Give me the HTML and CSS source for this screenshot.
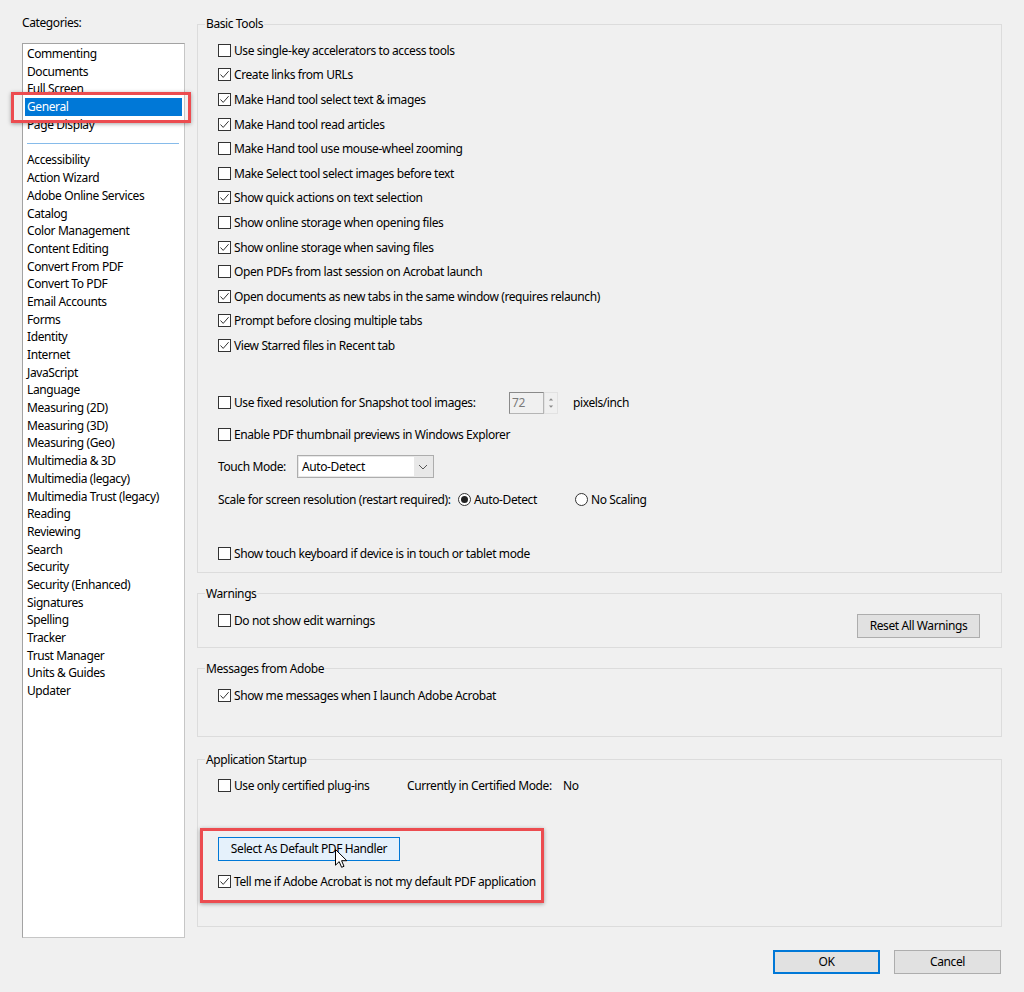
FILE: index.html
```html
<!DOCTYPE html>
<html lang="en">

<head>
    <meta charset="UTF-8">
    <meta name="viewport" content="width=device-width, initial-scale=1.0">
    <title>Preferences - General</title>
    <link rel="stylesheet" href="styles.css">
</head>

<body>
    <div class="dialog">
        <div class="categories">
            <div class="cat-title">Categories:</div>
            <ul class="cat-list">
                <li>Commenting</li>
                <li>Documents</li>
                <li>Full Screen</li>
                <li class="active">General</li>
                <li>Page Display</li>
                <li class="sep"></li>
                <li>Accessibility</li>
                <li>Action Wizard</li>
                <li>Adobe Online Services</li>
                <li>Catalog</li>
                <li>Color Management</li>
                <li>Content Editing</li>
                <li>Convert From PDF</li>
                <li>Convert To PDF</li>
                <li>Email Accounts</li>
                <li>Forms</li>
                <li>Identity</li>
                <li>Internet</li>
                <li>JavaScript</li>
                <li>Language</li>
                <li>Measuring (2D)</li>
                <li>Measuring (3D)</li>
                <li>Measuring (Geo)</li>
                <li>Multimedia &amp; 3D</li>
                <li>Multimedia (legacy)</li>
                <li>Multimedia Trust (legacy)</li>
                <li>Reading</li>
                <li>Reviewing</li>
                <li>Search</li>
                <li>Security</li>
                <li>Security (Enhanced)</li>
                <li>Signatures</li>
                <li>Spelling</li>
                <li>Tracker</li>
                <li>Trust Manager</li>
                <li>Units &amp; Guides</li>
                <li>Updater</li>
            </ul>
        </div>

        <div class="panel">
            <fieldset class="group basic">
                <legend>Basic Tools</legend>
                <label class="row"><span class="box"></span>Use single-key accelerators to access tools</label>
                <label class="row"><span class="box on"><svg viewBox="0 0 11 11"><path d="M1.5 5.5 4.2 8.4 9.6 2.2"/></svg></span>Create links from URLs</label>
                <label class="row"><span class="box on"><svg viewBox="0 0 11 11"><path d="M1.5 5.5 4.2 8.4 9.6 2.2"/></svg></span>Make Hand tool select text &amp; images</label>
                <label class="row"><span class="box on"><svg viewBox="0 0 11 11"><path d="M1.5 5.5 4.2 8.4 9.6 2.2"/></svg></span>Make Hand tool read articles</label>
                <label class="row"><span class="box"></span>Make Hand tool use mouse-wheel zooming</label>
                <label class="row"><span class="box"></span>Make Select tool select images before text</label>
                <label class="row"><span class="box on"><svg viewBox="0 0 11 11"><path d="M1.5 5.5 4.2 8.4 9.6 2.2"/></svg></span>Show quick actions on text selection</label>
                <label class="row"><span class="box"></span>Show online storage when opening files</label>
                <label class="row"><span class="box on"><svg viewBox="0 0 11 11"><path d="M1.5 5.5 4.2 8.4 9.6 2.2"/></svg></span>Show online storage when saving files</label>
                <label class="row"><span class="box"></span>Open PDFs from last session on Acrobat launch</label>
                <label class="row"><span class="box on"><svg viewBox="0 0 11 11"><path d="M1.5 5.5 4.2 8.4 9.6 2.2"/></svg></span>Open documents as new tabs in the same window (requires relaunch)</label>
                <label class="row"><span class="box on"><svg viewBox="0 0 11 11"><path d="M1.5 5.5 4.2 8.4 9.6 2.2"/></svg></span>Prompt before closing multiple tabs</label>
                <label class="row"><span class="box on"><svg viewBox="0 0 11 11"><path d="M1.5 5.5 4.2 8.4 9.6 2.2"/></svg></span>View Starred files in Recent tab</label>

                <div class="row snap">
                    <label class="snap-label"><span class="box"></span>Use fixed resolution for Snapshot tool images:</label>
                    <div class="spin">
                        <span class="spin-field">72</span>
                        <span class="spin-btns">
                            <svg viewBox="0 0 14 22"><path d="M4.5 8 7 5.5 9.5 8Z M4.5 14 7 16.5 9.5 14Z"/></svg>
                        </span>
                    </div>
                    <span class="unit">pixels/inch</span>
                </div>
                <label class="row thumb"><span class="box"></span>Enable PDF thumbnail previews in Windows Explorer</label>
                <div class="row touch">
                    <span class="touch-label">Touch Mode:</span>
                    <div class="select">
                        <span class="select-text">Auto-Detect</span>
                        <span class="select-arrow"><svg viewBox="0 0 18 20"><path d="M5 8 9 12 13 8"/></svg></span>
                    </div>
                </div>
                <div class="row scale">
                    <span class="scale-label">Scale for screen resolution (restart required):</span>
                    <label class="radio-item"><span class="radio on"></span>Auto-Detect</label>
                    <label class="radio-item"><span class="radio"></span>No Scaling</label>
                </div>
                <label class="row keyboard"><span class="box"></span>Show touch keyboard if device is in touch or tablet mode</label>
            </fieldset>

            <fieldset class="group warnings">
                <legend>Warnings</legend>
                <div class="warn-row">
                    <label class="row"><span class="box"></span>Do not show edit warnings</label>
                    <button class="btn reset">Reset All Warnings</button>
                </div>
            </fieldset>

            <fieldset class="group messages">
                <legend>Messages from Adobe</legend>
                <label class="row"><span class="box on"><svg viewBox="0 0 11 11"><path d="M1.5 5.5 4.2 8.4 9.6 2.2"/></svg></span>Show me messages when I launch Adobe Acrobat</label>
            </fieldset>

            <fieldset class="group startup">
                <legend>Application Startup</legend>
                <div class="row">
                    <label class="cert"><span class="box"></span>Use only certified plug-ins</label>
                    <span class="cert-mode">Currently in Certified Mode:</span>
                    <span>No</span>
                </div>
                <div class="mark">
                    <div class="handler-wrap">
                        <button class="btn handler">Select As Default PDF Handler</button>
                        <svg class="cursor" viewBox="0 0 13 20"><path d="M0.5 0.5V16.2L4.2 12.6 6.6 18.3 9 17.3 6.6 11.7H11.8Z"/></svg>
                    </div>
                    <label class="row"><span class="box on"><svg viewBox="0 0 11 11"><path d="M1.5 5.5 4.2 8.4 9.6 2.2"/></svg></span>Tell me if Adobe Acrobat is not my default PDF application</label>
                </div>
            </fieldset>

            <div class="actions">
                <button class="btn ok">OK</button>
                <button class="btn">Cancel</button>
            </div>
        </div>
    </div>
</body>

</html>
```

FILE: styles.css
```css
* {
    margin: 0;
    padding: 0;
    box-sizing: border-box;
}

body {
    background: #f0f0f0;
    font-family: "Noto Sans", "Open Sans", sans-serif;
    font-size: 12px;
    letter-spacing: -0.4px;
    color: #000;
}

.dialog {
    display: flex;
    padding: 15px 0 0 22px;
    height: 992px;
}

/* left side: category list */
.categories {
    width: 163px;
    margin-right: 12px;
}

.cat-title {
    height: 16px;
    line-height: 16px;
    margin-bottom: 12px;
}

.cat-list {
    list-style: none;
    height: 895px;
    background: #fff;
    border: 1px solid #a3a3a3;
    border-right-color: #c6c6c6;
    border-bottom-color: #c6c6c6;
    padding-top: 1px;
}

.cat-list li {
    height: 17.7px;
    line-height: 17.7px;
    padding-left: 4px;
    white-space: nowrap;
}

.cat-list li.active {
    position: relative;
    margin: 0 2px;
    padding-left: 2px;
    background: #0078d7;
    color: #fff;
}

.cat-list li.active::after {
    content: "";
    position: absolute;
    left: -14px;
    right: -9px;
    top: -6px;
    bottom: -7px;
    border: 3px solid #ec4c50;
    box-shadow: 0 1px 4px rgba(0, 0, 0, 0.35);
}

.cat-list li.sep {
    height: 1px;
    margin: 10px 5px 7px 4px;
    padding: 0;
    background: #86bbea;
}

/* right side: option groups */
.panel {
    width: 805px;
}

.group {
    border: 1px solid #dcdcdc;
    padding: 0 20px;
    margin-top: 1px;
}

.group legend {
    margin-left: -13px;
    padding: 0 1px;
    line-height: 16px;
    height: 16px;
}

.row {
    display: flex;
    align-items: center;
    height: 24.6px;
    white-space: nowrap;
}

.box {
    width: 13px;
    height: 13px;
    border: 1px solid #333;
    background: #fff;
    margin-right: 3px;
    flex-shrink: 0;
    display: flex;
}

.box svg {
    width: 11px;
    height: 11px;
    fill: none;
    stroke: #333;
    stroke-width: 1;
}

.basic {
    padding-top: 6px;
    padding-bottom: 6px;
}

.basic .snap {
    margin-top: 33px;
    height: 24px;
}

.snap-label {
    display: flex;
    align-items: center;
    width: 291px;
}

.spin {
    display: flex;
    height: 22px;
}

.spin-field {
    width: 35px;
    border: 1px solid #b5b5b5;
    border-top-color: #8a8a8a;
    border-left-color: #8a8a8a;
    color: #7a7a7a;
    padding-left: 2px;
    line-height: 19px;
    background: #f0f0f0;
}

.spin-btns {
    width: 15px;
    display: flex;
}

.spin-btns svg {
    width: 14px;
    height: 22px;
    fill: #8a8a8a;
    border: 1px solid #e2e2e2;
}

.unit {
    margin-left: 14px;
}

.basic .thumb {
    margin-top: 8px;
    height: 24px;
}

.basic .touch {
    margin-top: 8px;
    height: 24px;
}

.touch-label {
    width: 79px;
}

.select {
    width: 137px;
    height: 23px;
    border: 1px solid #adadad;
    background: #e8e8e8;
    display: flex;
    padding: 1px;
}

.select-text {
    flex: 1;
    background: #fff;
    line-height: 19px;
    padding-left: 3px;
}

.select-arrow {
    width: 18px;
    display: flex;
}

.select-arrow svg {
    width: 18px;
    height: 20px;
    fill: none;
    stroke: #555;
    stroke-width: 1;
}

.basic .scale {
    margin-top: 9px;
    height: 24px;
}

.scale-label {
    width: 240px;
}

.radio-item {
    display: flex;
    align-items: center;
    width: 117px;
}

.radio {
    width: 13px;
    height: 13px;
    border: 1px solid #333;
    border-radius: 50%;
    background: #fff;
    margin-right: 3px;
    display: flex;
    align-items: center;
    justify-content: center;
}

.radio.on::before {
    content: "";
    width: 7px;
    height: 7px;
    border-radius: 50%;
    background: #222;
}

.basic .keyboard {
    margin-top: 30px;
    height: 24px;
}

.warnings {
    margin-top: 13px;
    padding-top: 7px;
    padding-bottom: 9px;
}

.warn-row {
    display: flex;
    justify-content: space-between;
    align-items: flex-start;
    padding-right: 1px;
}

.warn-row .row {
    height: 24px;
}

.btn {
    font-family: inherit;
    font-size: 12px;
    letter-spacing: -0.4px;
    color: #000;
    background: #e1e1e1;
    border: 1px solid #adadad;
    height: 24px;
    cursor: default;
}

.reset {
    width: 123px;
    margin-top: 5px;
}

.messages {
    margin-top: 13px;
    padding-top: 7px;
    padding-bottom: 28px;
}

.messages .row {
    height: 24px;
}

.startup {
    margin-top: 15px;
    padding-top: 6px;
    padding-bottom: 23px;
}

.startup .row {
    height: 24px;
}

.cert {
    display: flex;
    align-items: center;
    width: 189px;
}

.cert-mode {
    width: 156px;
}

.mark {
    width: 344px;
    margin: 30px 0 0 -18px;
    border: 3px solid #ec4c50;
    box-shadow: 0 1px 4px rgba(0, 0, 0, 0.35);
    padding: 6px 0 6px 15px;
}

.handler-wrap {
    position: relative;
    width: 182px;
    margin-bottom: 9px;
}

.handler {
    width: 182px;
    background: #e5f1fb;
    border-color: #0078d7;
}

.cursor {
    position: absolute;
    left: 117px;
    top: 12px;
    width: 13px;
    height: 20px;
    fill: #fff;
    stroke: #000;
    stroke-width: 1;
}

.actions {
    display: flex;
    justify-content: flex-end;
    gap: 14px;
    margin-top: 23px;
    padding-right: 1px;
}

.actions .btn {
    width: 107px;
}

.actions .ok {
    border: 2px solid #0078d7;
}
```
